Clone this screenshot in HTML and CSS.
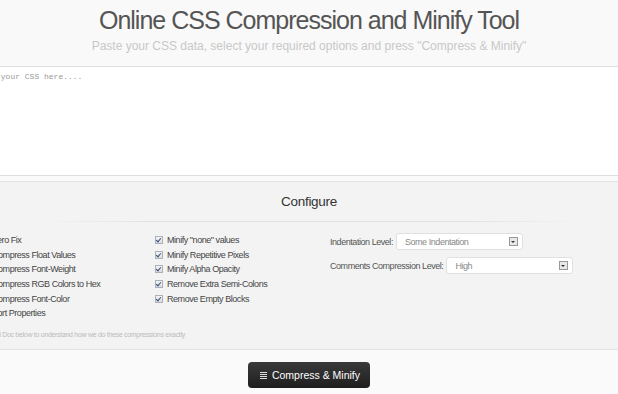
FILE: index.html
```html
<!DOCTYPE html>
<html lang="en">
<head>
    <meta charset="UTF-8">
    <meta name="viewport" content="width=device-width, initial-scale=1.0">
    <title>Online CSS Compression and Minify Tool</title>
    <link rel="stylesheet" href="styles.css">
</head>
<body>
    <div class="header">
        <h1>Online CSS Compression and Minify Tool</h1>
        <p class="lead">Paste your CSS data, select your required options and press "Compress &amp; Minify"</p>
    </div>

    <div class="editor">
        <textarea id="css-input" placeholder="Paste your CSS here...."></textarea>
    </div>

    <div class="configure">
        <h2>Configure</h2>
        <div class="divider"></div>
        <div class="options">
            <div class="col">
                <label><input type="checkbox" checked> Zero Fix</label>
                <label><input type="checkbox" checked> Compress Float Values</label>
                <label><input type="checkbox" checked> Compress Font-Weight</label>
                <label><input type="checkbox" checked> Compress RGB Colors to Hex</label>
                <label><input type="checkbox" checked> Compress Font-Color</label>
                <label><input type="checkbox" checked> Sort Properties</label>
            </div>
            <div class="col">
                <label><input type="checkbox" checked> Minify "none" values</label>
                <label><input type="checkbox" checked> Minify Repetitive Pixels</label>
                <label><input type="checkbox" checked> Minify Alpha Opacity</label>
                <label><input type="checkbox" checked> Remove Extra Semi-Colons</label>
                <label><input type="checkbox" checked> Remove Empty Blocks</label>
            </div>
            <div class="col levels">
                <div class="level">
                    <span>Indentation Level:</span>
                    <div class="select">Some Indentation<span class="arrow"></span></div>
                </div>
                <div class="level">
                    <span>Comments Compression Level:</span>
                    <div class="select">High<span class="arrow"></span></div>
                </div>
            </div>
        </div>
        <p class="note">Read Doc below to understand how we do these compressions exactly</p>
    </div>

    <div class="actions">
        <button id="compress-btn"><span class="menu-icon"></span>Compress &amp; Minify</button>
    </div>
</body>
</html>
```

FILE: styles.css
```css
body {
    margin: 0;
    padding: 0;
    overflow: hidden;
    background-color: #fafafa;
    font-family: "Liberation Sans", Arial, sans-serif;
    color: #444;
}

.header {
    text-align: center;
    height: 66px;
    background-color: #f9f9f9;
}

h1 {
    margin: 0;
    padding-top: 4px;
    font-size: 25px;
    font-weight: normal;
    letter-spacing: -1px;
    color: #555;
    line-height: 32px;
}

.lead {
    margin: 3px 0 0;
    font-size: 12px;
    color: #c8c8c8;
}

.editor {
    margin: 0 -50px;
    border-top: 1px solid #ddd;
    border-bottom: 1px solid #ddd;
    background-color: #fff;
}

.editor textarea {
    display: block;
    box-sizing: border-box;
    width: 100%;
    height: 108px;
    margin: 0;
    padding: 5px 22px;
    border: none;
    resize: none;
    outline: none;
    font-family: "Liberation Mono", "Courier New", monospace;
    font-size: 8px;
}

.editor textarea::placeholder {
    color: #999;
}

.configure {
    margin-top: 5px;
    border-top: 1px solid #e4e4e4;
    border-bottom: 1px solid #e4e4e4;
    background-color: #f3f3f3;
    height: 167px;
}

h2 {
    margin: 0;
    padding-top: 12px;
    text-align: center;
    font-size: 13.5px;
    font-weight: normal;
    letter-spacing: -0.3px;
    color: #333;
    line-height: 16px;
}

.divider {
    height: 1px;
    width: 536px;
    margin: 11px auto 0;
    background: linear-gradient(to right, rgba(226,226,226,0), #e2e2e2 20%, #e2e2e2 80%, rgba(226,226,226,0));
}

.options {
    display: grid;
    grid-template-columns: 175px 175px 1fr;
    margin: 11px 0 0 -20px;
}

.col label {
    display: flex;
    align-items: center;
    height: 14.6px;
    font-size: 9px;
    letter-spacing: -0.45px;
    color: #444;
}

.col input {
    appearance: none;
    position: relative;
    box-sizing: border-box;
    width: 8px;
    height: 8px;
    margin: 0 4px 0 0;
    border: 1px solid #a9b3c0;
    background: linear-gradient(#f4f4f4, #dcdcdc);
}

.col input:checked::after {
    content: "";
    position: absolute;
    left: 1px;
    top: 0;
    width: 2px;
    height: 4px;
    border: solid #3c4f78;
    border-width: 0 1px 1px 0;
    transform: rotate(40deg);
}

.level {
    display: flex;
    align-items: center;
    font-size: 9px;
    letter-spacing: -0.45px;
    color: #555;
    margin-bottom: 7px;
}

.select {
    position: relative;
    box-sizing: border-box;
    width: 127px;
    height: 17px;
    margin-left: 3px;
    padding: 3px 8px;
    background-color: #fff;
    border: 1px solid #e0e0e0;
    border-radius: 3px;
    color: #888;
    font-size: 9px;
    line-height: 10px;
}

.arrow {
    position: absolute;
    right: 4px;
    top: 3px;
    width: 7px;
    height: 7px;
    border: 1px solid #999;
    background: #e8e8e8;
}

.arrow::after {
    content: "";
    position: absolute;
    left: 1px;
    top: 3px;
    border-left: 2.5px solid transparent;
    border-right: 2.5px solid transparent;
    border-top: 2px solid #333;
}

.note {
    margin: 10px 0 0 -15px;
    font-size: 7px;
    letter-spacing: -0.3px;
    color: #bbb;
}

.actions {
    text-align: center;
    padding-top: 12px;
}

#compress-btn {
    display: inline-flex;
    align-items: center;
    height: 26px;
    padding: 0 10px 0 12px;
    border: none;
    border-radius: 4px;
    background: linear-gradient(#3a3a3a, #1e1e1e);
    color: #fff;
    font-family: "Liberation Sans", Arial, sans-serif;
    font-size: 10.5px;
    cursor: pointer;
}

.menu-icon {
    display: inline-block;
    width: 7px;
    height: 7px;
    margin-right: 5px;
    background: repeating-linear-gradient(#ddd 0 1px, transparent 1px 2px);
}
```
